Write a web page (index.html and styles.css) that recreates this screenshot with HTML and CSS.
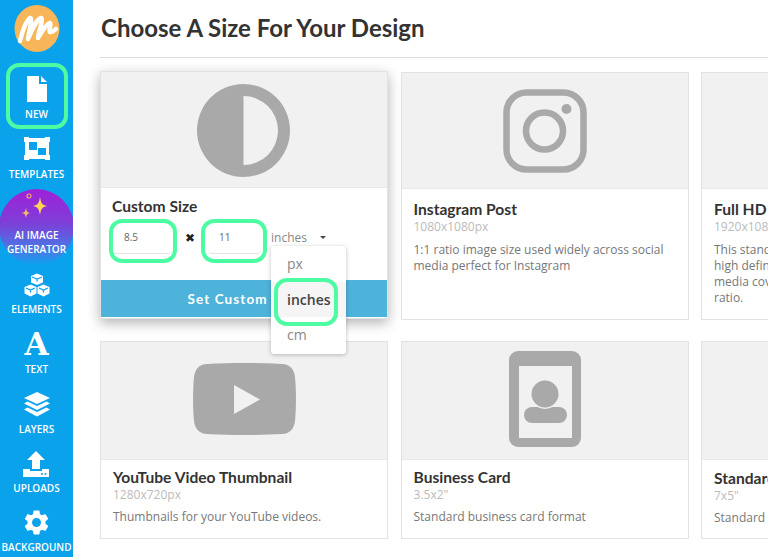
FILE: index.html
```html
<!DOCTYPE html>
<html lang="en">
<head>
    <meta charset="UTF-8">
    <title>Choose A Size For Your Design</title>
    <link rel="stylesheet" href="styles.css">
</head>
<body>
    <nav class="sidebar">
        <div class="logo">
            <svg width="46" height="47" viewBox="0 0 46 47">
                <ellipse cx="23" cy="23.5" rx="22.5" ry="23.5" fill="#f9b658"/>
                <path d="M6 36C8 28 12 16 16 13C19 12 15 27 14 34C18 24 24 13 27 13C30 14 24 28 24 33C27 28 33 18 36 18C38 19 34 26 36 27C38 27 41 25 42 24" fill="none" stroke="#fff" stroke-width="4.5" stroke-linecap="round" stroke-linejoin="round"/>
            </svg>
        </div>
        <a class="nav-item nav-new">
            <svg width="20" height="26" viewBox="0 0 20 26"><path d="M0 0H12V8H20V26H0Z M14 0L20 6H14Z" fill="#fff"/></svg>
            <span>NEW</span>
            <i class="ring ring-new"></i>
        </a>
        <a class="nav-item nav-templates">
            <svg width="26" height="23" viewBox="0 0 26 23"><path d="M0 0H5V1H21V0H26V5H25V18H26V23H21V22H5V23H0V18H1V5H0Z" fill="#fff"/><path d="M5 5H13V13H5Z M14 11H22V18H14Z" fill="#0ba2ec"/></svg>
            <span>TEMPLATES</span>
        </a>
        <a class="nav-ai">
            <svg class="sparkle" width="32" height="30" viewBox="0 0 32 30">
                <circle cx="11" cy="4" r="2" fill="none" stroke="#f5a96a" stroke-width="1.2"/>
                <path d="M22 5C23 11 24 13 29 14C24 15 23 17 22 23C21 17 20 15 15 14C20 13 21 11 22 5Z" fill="#fcd257"/>
                <path d="M8 15.5C8.5 19.5 9 20.5 12.5 21C9 21.5 8.5 22.5 8 26.5C7.5 22.5 7 21.5 3.5 21C7 20.5 7.5 19.5 8 15.5Z" fill="#f9b96a"/>
            </svg>
            <span>AI IMAGE<br>GENERATOR</span>
        </a>
        <a class="nav-item nav-elements">
            <svg width="26" height="25" viewBox="0 0 26 24"><path d="M13 0L19 2.5V9L13 11.5L7 9V2.5Z M6.5 11L12.5 13.5V20L6.5 23L0.5 20V13.5Z M19.5 11L25.5 13.5V20L19.5 23L13.5 20V13.5Z" fill="#fff"/><path d="M8 3.5L13 5.5L18 3.5M13 5.5V8M2 14.5L6.5 16.5L11 14.5M6.5 16.5V19M15 14.5L19.5 16.5L24 14.5M19.5 16.5V19" fill="none" stroke="#0ba2ec" stroke-width="1.3"/></svg>
            <span>ELEMENTS</span>
        </a>
        <a class="nav-item nav-text">
            <span class="text-glyph">A</span>
            <span>TEXT</span>
        </a>
        <a class="nav-item nav-layers">
            <svg width="26" height="25" viewBox="0 0 26 25"><path d="M13 0L26 6L13 12L0 6Z" fill="#fff"/><path d="M3.5 9.5L13 14L22.5 9.5L26 11.5L13 18L0 11.5Z M3.5 15.5L13 20L22.5 15.5L26 17.5L13 24.5L0 17.5Z" fill="#fff"/></svg>
            <span>LAYERS</span>
        </a>
        <a class="nav-item nav-uploads">
            <svg width="26" height="26" viewBox="0 0 26 26"><path d="M13 0L22 9H17V18H9V9H4Z" fill="#fff"/><path d="M0 18H7V20H19V18H26V26H0Z" fill="#fff"/><circle cx="19" cy="23" r="1" fill="#0ba2ec"/><circle cx="22.5" cy="23" r="1" fill="#0ba2ec"/></svg>
            <span>UPLOADS</span>
        </a>
        <a class="nav-item nav-background">
            <svg width="27" height="25" viewBox="2.5 2 19 20"><path fill="#fff" d="M19.14 12.94c.04-.3.06-.61.06-.94 0-.32-.02-.64-.07-.94l2.03-1.58c.18-.14.23-.41.12-.61l-1.92-3.32c-.12-.22-.37-.29-.59-.22l-2.39.96c-.5-.38-1.03-.7-1.62-.94l-.36-2.54c-.04-.24-.24-.41-.48-.41h-3.84c-.24 0-.43.17-.47.41l-.36 2.54c-.59.24-1.13.57-1.62.94l-2.39-.96c-.22-.08-.47 0-.59.22L2.74 8.87c-.12.21-.08.47.12.61l2.03 1.58c-.05.3-.09.63-.09.94s.02.64.07.94l-2.03 1.58c-.18.14-.23.41-.12.61l1.92 3.32c.12.22.37.29.59.22l2.39-.96c.5.38 1.03.7 1.62.94l.36 2.54c.05.24.24.41.48.41h3.84c.24 0 .44-.17.47-.41l.36-2.54c.59-.24 1.13-.56 1.62-.94l2.39.96c.22.08.47 0 .59-.22l1.92-3.32c.12-.22.07-.47-.12-.61l-2.01-1.58zM12 15.6c-1.98 0-3.6-1.62-3.6-3.6s1.62-3.6 3.6-3.6 3.6 1.62 3.6 3.6-1.62 3.6-3.6 3.6z"/></svg>
            <span>BACKGROUND</span>
        </a>
    </nav>

    <main class="content">
        <h1 class="page-title">Choose A Size For Your Design</h1>
        <div class="card-row row-one">
            <section class="card card-custom">
                <div class="thumb">
                    <svg width="93" height="93" viewBox="0 0 93 93"><circle cx="46.5" cy="46.5" r="46.5" fill="#a9a9a9"/><path d="M46.5 12A34.5 34.5 0 0 1 46.5 81Z" fill="#f1f1f1"/></svg>
                </div>
                <div class="custom-body">
                    <h3 class="card-title">Custom Size</h3>
                    <div class="size-row">
                        <div class="size-input input-w">8.5<i class="ring"></i></div>
                        <span class="times">&#10006;</span>
                        <div class="size-input input-h">11<i class="ring"></i></div>
                        <span class="unit">inches</span>
                        <span class="caret"></span>
                    </div>
                </div>
                <button class="set-button">Set Custom Size</button>
                <ul class="unit-menu">
                    <li>px</li>
                    <li class="unit-active">inches<i class="ring"></i></li>
                    <li>cm</li>
                </ul>
            </section>
            <section class="card">
                <div class="thumb">
                    <svg width="84" height="84" viewBox="0 0 84 84"><rect x="3.5" y="3.5" width="77" height="77" rx="20" fill="none" stroke="#a9a9a9" stroke-width="6.5"/><circle cx="41.5" cy="42" r="18.5" fill="none" stroke="#a9a9a9" stroke-width="6.5"/><circle cx="63.5" cy="20" r="5" fill="#a9a9a9"/></svg>
                </div>
                <div class="card-body">
                    <h3 class="card-title">Instagram Post</h3>
                    <div class="card-size">1080x1080px</div>
                    <p class="card-desc">1:1 ratio image size used widely across social media perfect for Instagram</p>
                </div>
            </section>
            <section class="card">
                <div class="thumb"></div>
                <div class="card-body">
                    <h3 class="card-title">Full HD Video</h3>
                    <div class="card-size">1920x1080px</div>
                    <p class="card-desc">This standard size is used for<br>high definition video and social<br>media covers with a 16:9<br>ratio.</p>
                </div>
            </section>
        </div>
        <div class="card-row row-two">
            <section class="card">
                <div class="thumb">
                    <svg width="103" height="72" viewBox="0 0 103 72"><path d="M14 1C38 -0.3 65 -0.3 89 1C97 1.5 101 6 102 14C103.3 28 103.3 44 102 58C101 66 97 70.5 89 71C65 72.3 38 72.3 14 71C6 70.5 2 66 1 58C-0.3 44 -0.3 28 1 14C2 6 6 1.5 14 1Z" fill="#a9a9a9"/><path d="M41 22L67 36.5L41 51Z" fill="#f1f1f1"/></svg>
                </div>
                <div class="card-body">
                    <h3 class="card-title">YouTube Video Thumbnail</h3>
                    <div class="card-size">1280x720px</div>
                    <p class="card-desc">Thumbnails for your YouTube videos.</p>
                </div>
            </section>
            <section class="card">
                <div class="thumb">
                    <svg width="72" height="96" viewBox="0 0 72 96"><rect width="72" height="96" rx="9" fill="#a9a9a9"/><rect x="10" y="15" width="53" height="72" fill="#f1f1f1"/><rect x="15" y="56" width="43" height="16" rx="8" fill="#a9a9a9"/><circle cx="36" cy="43" r="15" fill="#f1f1f1"/><circle cx="36" cy="43" r="13.5" fill="#a9a9a9"/></svg>
                </div>
                <div class="card-body">
                    <h3 class="card-title">Business Card</h3>
                    <div class="card-size">3.5x2"</div>
                    <p class="card-desc">Standard business card format</p>
                </div>
            </section>
            <section class="card card-standard">
                <div class="thumb"></div>
                <div class="card-body">
                    <h3 class="card-title">Standard Photo</h3>
                    <div class="card-size">7x5"</div>
                    <p class="card-desc">Standard landscape format</p>
                </div>
            </section>
        </div>
    </main>
</body>
</html>
```

FILE: styles.css
```css
html, body {
    margin: 0;
    height: 557px;
    overflow: hidden;
}
body {
    display: flex;
    font-family: "Open Sans", sans-serif;
    background-color: #fff;
    color: #333;
}
.sidebar {
    flex: 0 0 73px;
    height: 557px;
    overflow: hidden;
    background-color: #0ba2ec;
    display: flex;
    flex-direction: column;
    align-items: center;
}
.logo {
    height: 47px;
    margin-top: 5px;
}
.nav-item {
    position: relative;
    display: flex;
    flex-direction: column;
    align-items: center;
    color: #fff;
    font-size: 10px;
    font-weight: 600;
    line-height: 14px;
    white-space: nowrap;
}
.nav-item span {
    display: block;
}
.nav-item svg {
    display: block;
}
.nav-new {
    margin-top: 24px;
    align-self: stretch;
}
.nav-new svg {
    margin-bottom: 5px;
}
.nav-templates {
    margin-top: 16px;
}
.nav-templates svg {
    margin-bottom: 7px;
}
.nav-ai {
    margin-top: 8px;
    width: 75px;
    height: 76px;
    flex: none;
    position: relative;
    border-radius: 50%;
    background: linear-gradient(180deg, #a020d8 0%, #7d3fd8 45%, #3e82e8 85%, #0ba2ec 100%);
    color: #fff;
    font-size: 10px;
    font-weight: 600;
    line-height: 14px;
    text-align: center;
}
.nav-ai span {
    position: absolute;
    left: 0;
    right: 0;
    top: 39px;
}
.sparkle {
    position: absolute;
    left: 19px;
    top: 3px;
}
.nav-elements {
    margin-top: 8px;
}
.nav-elements svg {
    margin-bottom: 4px;
}
.nav-text {
    margin-top: 17px;
}
.nav-item .text-glyph {
    font-family: "DejaVu Serif", serif;
    font-weight: 700;
    font-size: 31px;
    line-height: 22px;
    height: 22px;
    margin-bottom: 7px;
}
.nav-layers {
    margin-top: 16px;
}
.nav-layers svg {
    margin-bottom: 5px;
}
.nav-uploads {
    margin-top: 15px;
}
.nav-uploads svg {
    margin-bottom: 4px;
}
.nav-background {
    margin-top: 15px;
}
.nav-background svg {
    margin-bottom: 5px;
}
.ring {
    position: absolute;
    border: 4px solid #4dfca2;
    border-radius: 13px;
    box-sizing: border-box;
}
.ring-new {
    left: 6px;
    right: 5px;
    top: -13px;
    bottom: -8px;
}
.content {
    flex: 1;
    min-width: 0;
    overflow: hidden;
    padding-left: 27px;
}
.page-title {
    margin: 0;
    height: 57px;
    padding-left: 1px;
    line-height: 56px;
    font-family: Lato, sans-serif;
    font-size: 24px;
    font-weight: 700;
    color: #333;
    border-bottom: 1px solid #ddd;
}
.card-row {
    display: flex;
    gap: 12.5px;
}
.row-one {
    margin-top: 14px;
}
.row-two {
    margin-top: 21px;
}
.card {
    position: relative;
    flex: 0 0 288px;
    box-sizing: border-box;
    border: 1px solid #e2e2e2;
    background-color: #fff;
}
.row-one .card {
    height: 248px;
}
.row-two .card {
    height: 198px;
}
.card-custom {
    transform: translateY(-1px);
    box-shadow: 0 4px 12px rgba(0, 0, 0, 0.3);
    z-index: 1;
}
.thumb {
    background-color: #f1f1f1;
    display: flex;
    align-items: center;
    justify-content: center;
    border-bottom: 1px solid #e8e8e8;
}
.row-one .thumb {
    height: 115px;
}
.row-two .thumb {
    height: 113px;
    padding-bottom: 4px;
}
.card-custom .thumb svg {
    margin: 2px 2px 0 0;
}
.card-body {
    padding: 10px 12px 0;
}
.row-two .card-body {
    padding-top: 7px;
}
.row-two .card-standard .card-body {
    padding-top: 8px;
}
.card-title {
    margin: 0;
    font-family: Lato, sans-serif;
    font-size: 15.6px;
    font-weight: 700;
    line-height: 20px;
    color: #333;
    white-space: nowrap;
}
.card-size {
    font-size: 12px;
    line-height: 16px;
    color: #bbb;
}
.card-desc {
    margin: 7px 0 0;
    font-size: 12px;
    line-height: 16px;
    color: #777;
    white-space: nowrap;
}
.card:not(:last-child) .card-desc {
    white-space: normal;
}
.row-two .card-desc {
    margin-top: 6px;
}
.custom-body {
    padding: 8px 11px 0;
    height: 92px;
    box-sizing: border-box;
}
.size-row {
    display: flex;
    align-items: center;
    margin-top: 5px;
}
.size-input {
    position: relative;
    box-sizing: border-box;
    height: 33px;
    line-height: 33px;
    font-size: 10px;
    color: #666;
    border-bottom: 1px solid #e4e4e4;
    border-radius: 4px;
}
.input-w {
    width: 60px;
    padding-left: 12px;
}
.input-h {
    width: 53px;
    padding-left: 11px;
}
.input-w .ring {
    left: -3px;
    right: -5px;
    top: -2px;
    bottom: -10px;
}
.input-h .ring {
    left: -7px;
    right: -6px;
    top: -2px;
    bottom: -10px;
}
.times {
    width: 36px;
    text-align: center;
    font-family: "DejaVu Sans", sans-serif;
    font-size: 12px;
    color: #222;
}
.unit {
    margin-left: 10px;
    font-size: 12px;
    color: #888;
}
.caret {
    margin-left: 13px;
    border-left: 3px solid transparent;
    border-right: 3px solid transparent;
    border-top: 3px solid #444;
}
.set-button {
    display: block;
    width: 100%;
    height: 37px;
    border: none;
    padding: 0;
    background-color: #4db3da;
    color: #fff;
    font-family: Lato, sans-serif;
    font-size: 13.5px;
    font-weight: 700;
    letter-spacing: 1.1px;
}
.unit-menu {
    position: absolute;
    left: 170px;
    top: 174px;
    width: 75px;
    height: 108px;
    box-sizing: border-box;
    margin: 0;
    padding: 0;
    list-style: none;
    background-color: #fff;
    border-radius: 3px;
    box-shadow: 0 1px 4px rgba(0, 0, 0, 0.25);
    font-size: 14px;
    color: #888;
}
.unit-menu li {
    position: relative;
    height: 35.5px;
    line-height: 35.5px;
    padding-left: 16px;
}
.unit-menu .unit-active {
    background-color: #f5f5f5;
    color: #444;
    font-weight: 600;
}
.unit-active .ring {
    left: 3px;
    right: 8px;
    top: -4px;
    bottom: -9px;
}
```
